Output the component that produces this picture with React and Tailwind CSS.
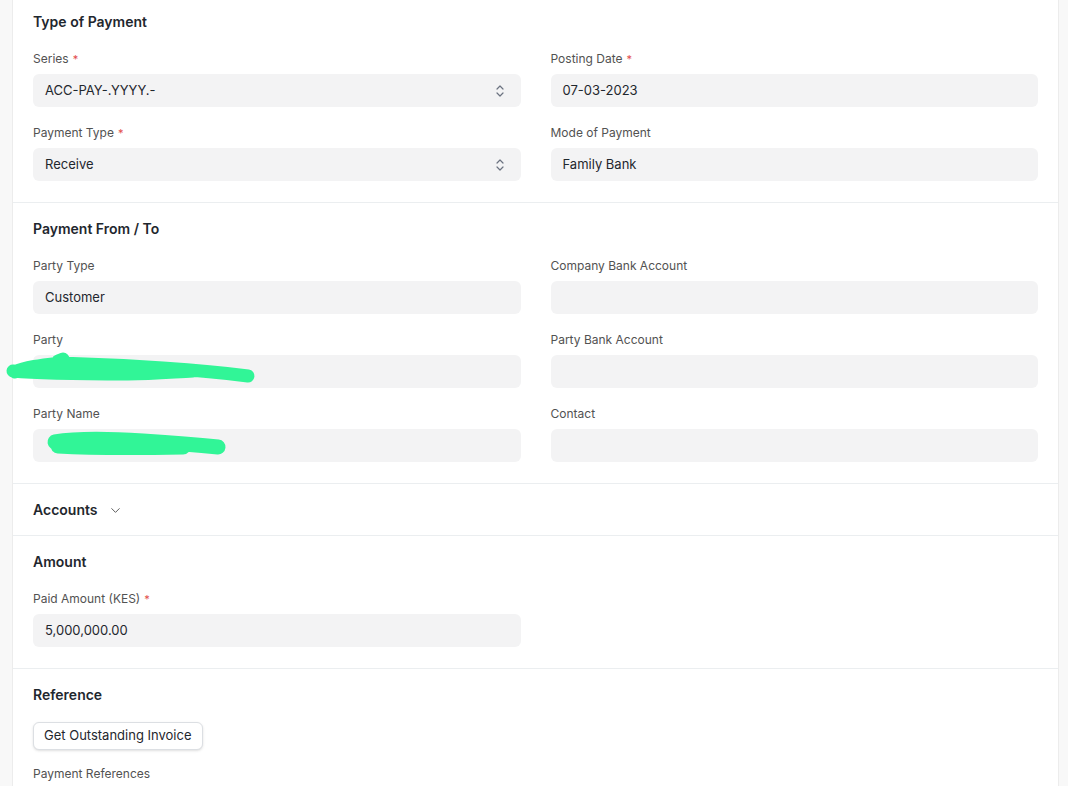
import { ChevronDown } from 'lucide-react'

const SelectArrows = () => (
  <svg width="10" height="14" viewBox="0 0 10 14" fill="none" stroke="#6b7280" strokeWidth="1.2" strokeLinecap="round" strokeLinejoin="round">
    <path d="M2 5 L5 2 L8 5" />
    <path d="M2 9 L5 12 L8 9" />
  </svg>
)

const Field = ({ label, required, value, select, scribble }) => (
  <div className="relative">
    <div className="h-4 leading-4 text-[12px] text-[#525252] mb-[7px]">
      {label}
      {required && <span className="text-[#e24c4c] ml-1 text-[11px]">*</span>}
    </div>
    <div className="relative h-[33px] rounded-md bg-[#f3f3f4] px-3 flex items-center justify-between text-[13px] text-[#1f272e]">
      <span>{value}</span>
      {select && <span className="mr-1"><SelectArrows /></span>}
      {scribble && (
        <svg className="absolute left-0 top-0 pointer-events-none overflow-visible" width="1" height="1">
          <path d={scribble.d} stroke="#31f597" strokeWidth={scribble.w} strokeLinecap="round" strokeLinejoin="round" fill="none" />
        </svg>
      )}
    </div>
  </div>
)

const Section = ({ title, first, last, children, collapsed }) => (
  <div className={`px-5 ${first ? 'pt-3' : 'pt-4'} ${collapsed ? 'pb-[15px]' : 'pb-[21px]'} ${last ? '' : 'border-b border-[#ebeef0]'}`}>
    <div className="flex items-center h-5 leading-5 text-[14px] font-semibold text-[#1f272e]">
      {title}
      {collapsed && <ChevronDown size={15} strokeWidth={1.5} className="ml-[11px] text-[#525252]" />}
    </div>
    {children}
  </div>
)

export default function App() {
  return (
    <div className="min-h-screen bg-[#f8f8f8] pl-3" style={{ fontFamily: 'Inter, "Noto Sans", sans-serif' }}>
      <div className="w-[1047px] min-h-[786px] bg-white border-x border-[#ececec]">
        <Section title="Type of Payment" first>
          <div className="mt-[19px] grid grid-cols-2 gap-x-[30px] gap-y-[18px]">
            <Field label="Series" required value="ACC-PAY-.YYYY.-" select />
            <Field label="Posting Date" required value="07-03-2023" />
            <Field label="Payment Type" required value="Receive" select />
            <Field label="Mode of Payment" value="Family Bank" />
          </div>
        </Section>

        <Section title="Payment From / To">
          <div className="mt-[19px] grid grid-cols-2 gap-x-[30px] gap-y-[18px]">
            <Field label="Party Type" value="Customer" />
            <Field label="Company Bank Account" value="" />
            <Field
              label="Party"
              value=""
              scribble={{
                d: 'M-18 17 C-8 12 10 10 27 8 C60 9 100 11 130 13 C160 15 185 17 215 21 M-20 16 C0 18 40 19 95 19 C120 19 140 17 160 16 M25 6 L30 4',
                w: 13,
              }}
            />
            <Field label="Party Bank Account" value="" />
            <Field
              label="Party Name"
              value=""
              scribble={{
                d: 'M22 13 C45 9 80 10 110 12 C140 14 165 16 185 18 M25 17 C60 19 100 19 150 18',
                w: 15,
              }}
            />
            <Field label="Contact" value="" />
          </div>
        </Section>

        <Section title="Accounts" collapsed />

        <Section title="Amount">
          <div className="mt-[19px] grid grid-cols-2 gap-x-[30px]">
            <Field label="Paid Amount (KES)" required value="5,000,000.00" />
          </div>
        </Section>

        <Section title="Reference" last>
          <button className="mt-[17px] h-[28px] px-[10px] rounded-md border border-[#dcdfe3] bg-white shadow-sm text-[13px] text-[#1f272e]">
            Get Outstanding Invoice
          </button>
          <div className="mt-4 h-4 leading-4 text-[12px] text-[#525252]">Payment References</div>
        </Section>
      </div>
    </div>
  )
}
